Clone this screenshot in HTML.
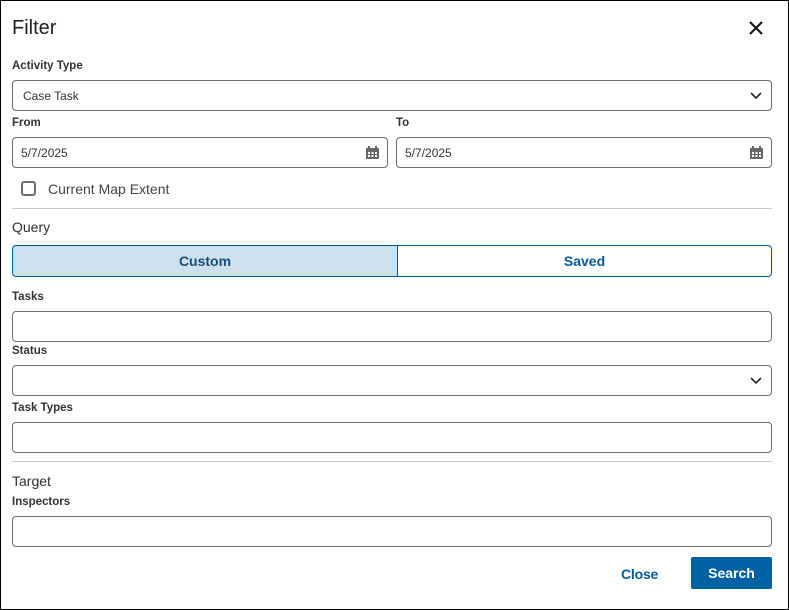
<!DOCTYPE html><html><head><style>
*{box-sizing:border-box;margin:0;padding:0}
body{width:789px;height:610px;background:#fff;font-family:"Liberation Sans",sans-serif;color:#333;position:relative;overflow:hidden}
.frame{position:absolute;left:0;top:0;width:789px;height:610px;border:1px solid #000}
.a{position:absolute}
.lbl{position:absolute;left:12px;font-size:11.5px;font-weight:bold;color:#333}
.box{position:absolute;border:1px solid #6b6e75;border-radius:4px;background:#fff}
.txt{font-size:12px;color:#333;position:absolute;left:8px;top:8px}
.hr{position:absolute;left:12px;width:760px;height:1px;background:#c8c8c8}
.sec{position:absolute;left:12px;font-size:14px;color:#333}
</style></head><body>
<div class="frame"></div>
<div class="a" style="left:12px;top:17px;font-size:20px;color:#222">Filter</div>
<svg class="a" style="left:749px;top:21px" width="14" height="14"><path d="M1 1L13 13M13 1L1 13" stroke="#111" stroke-width="2"/></svg>
<div class="lbl" style="top:60px">Activity Type</div>
<div class="box" style="left:12px;top:80px;width:760px;height:31px"><span class="txt" style="left:10px">Case Task</span>
<svg class="a" style="right:9px;top:11px" width="12" height="8"><path d="M1 1L6 6L11 1" stroke="#222" stroke-width="1.6" fill="none"/></svg></div>
<div class="lbl" style="top:117px">From</div>
<div class="lbl" style="top:117px;left:396px">To</div>
<div class="box" style="left:12px;top:137px;width:376px;height:31px"><span class="txt">5/7/2025</span>
<svg class="a" style="right:8px;top:8px" width="13" height="13"><rect x="0" y="2" width="13" height="11" rx="1" fill="#666"/><rect x="2" y="0" width="2" height="3" fill="#666"/><rect x="9" y="0" width="2" height="3" fill="#666"/><g fill="#fff"><rect x="2" y="6" width="2" height="2"/><rect x="5.5" y="6" width="2" height="2"/><rect x="9" y="6" width="2" height="2"/><rect x="2" y="9" width="2" height="2"/><rect x="5.5" y="9" width="2" height="2"/><rect x="9" y="9" width="2" height="2"/></g></svg></div>
<div class="box" style="left:396px;top:137px;width:376px;height:31px"><span class="txt">5/7/2025</span>
<svg class="a" style="right:8px;top:8px" width="13" height="13"><rect x="0" y="2" width="13" height="11" rx="1" fill="#666"/><rect x="2" y="0" width="2" height="3" fill="#666"/><rect x="9" y="0" width="2" height="3" fill="#666"/><g fill="#fff"><rect x="2" y="6" width="2" height="2"/><rect x="5.5" y="6" width="2" height="2"/><rect x="9" y="6" width="2" height="2"/><rect x="2" y="9" width="2" height="2"/><rect x="5.5" y="9" width="2" height="2"/><rect x="9" y="9" width="2" height="2"/></g></svg></div>
<div class="a" style="left:21px;top:181px;width:15px;height:15px;border:2px solid #6b6e75;border-radius:3px"></div>
<div class="a" style="left:48px;top:181px;font-size:14px;color:#444">Current Map Extent</div>
<div class="hr" style="top:208px"></div>
<div class="sec" style="top:219px">Query</div>
<div class="a" style="left:12px;top:245px;width:386px;height:32px;background:#cde0ee;border:1px solid #005a9c;border-radius:4px 0 0 4px;text-align:center;line-height:31px;font-size:14px;font-weight:bold;color:#1a4f7a">Custom</div>
<div class="a" style="left:397px;top:245px;width:375px;height:32px;background:#fff;border:1px solid #005a9c;border-radius:0 4px 4px 0;text-align:center;line-height:31px;font-size:14px;font-weight:bold;color:#005a9c">Saved</div>
<div class="lbl" style="top:291px">Tasks</div>
<div class="box" style="left:12px;top:311px;width:760px;height:31px"></div>
<div class="lbl" style="top:345px">Status</div>
<div class="box" style="left:12px;top:365px;width:760px;height:31px"><svg class="a" style="right:9px;top:11px" width="12" height="8"><path d="M1 1L6 6L11 1" stroke="#222" stroke-width="1.6" fill="none"/></svg></div>
<div class="lbl" style="top:402px">Task Types</div>
<div class="box" style="left:12px;top:422px;width:760px;height:31px"></div>
<div class="hr" style="top:461px"></div>
<div class="sec" style="top:473px">Target</div>
<div class="lbl" style="top:496px">Inspectors</div>
<div class="box" style="left:12px;top:516px;width:760px;height:31px"></div>
<div class="a" style="left:621px;top:566px;font-size:14px;font-weight:bold;color:#005a9c;letter-spacing:-0.2px">Close</div>
<div class="a" style="left:691px;top:557px;width:81px;height:32px;background:#0062a3;border-radius:2px;color:#fff;font-size:14px;font-weight:bold;text-align:center;line-height:33px">Search</div>
</body></html>
